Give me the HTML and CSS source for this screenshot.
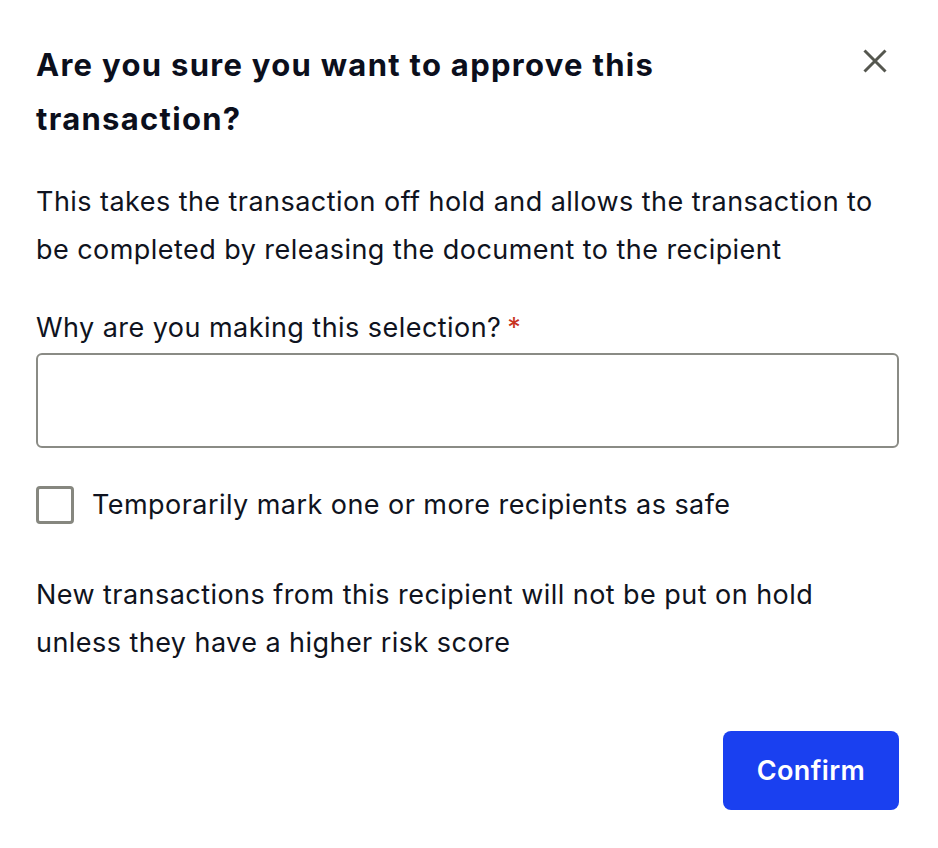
FILE: index.html
```html
<!DOCTYPE html>
<html lang="en">
<head>
<meta charset="utf-8">
<title>Approve transaction</title>
<link rel="stylesheet" href="styles.css">
</head>
<body>
<div class="dialog">
  <div class="header">
    <h1 class="title">Are you sure you want to approve this transaction?</h1>
    <button class="close" aria-label="Close">
      <svg width="24" height="24" viewBox="0 0 24 24"><path d="M1.5 1.5 L22.5 22.5 M22.5 1.5 L1.5 22.5" stroke="#55574f" stroke-width="3" stroke-linecap="butt" fill="none"/></svg>
    </button>
  </div>
  <p class="desc">This takes the transaction off hold and allows the transaction to be completed by releasing the document to the recipient</p>
  <label class="label">Why are you making this selection?<span class="req">*</span></label>
  <textarea class="input"></textarea>
  <label class="check-row"><span class="checkbox"></span><span>Temporarily mark one or more recipients as safe</span></label>
  <p class="note">New transactions from this recipient will not be put on hold unless they have a higher risk score</p>
  <div class="footer"><button class="confirm">Confirm</button></div>
</div>
</body>
</html>
```
FILE: styles.css
```css
html, body { margin: 0; padding: 0; background: #fff; }
body { font-family: Inter, "Noto Sans", sans-serif; color: #0f1320; font-optical-sizing: none; font-variation-settings: "opsz" 14; }
.dialog { padding: 38px 39px 0 36px; display: flex; flex-direction: column; }
.header { display: flex; align-items: flex-start; gap: 24px; }
.title { flex: 1; margin: 0; font-size: 31px; font-weight: 700; line-height: 54px; letter-spacing: 1.3px; color: #0b0f1c; }
.close { margin: 11px 12px 0 0; width: 24px; height: 24px; padding: 0; border: 0; background: none; display: flex; align-items: center; justify-content: center; }
.desc, .label, .check-row, .note { font-size: 27px; line-height: 48px; letter-spacing: 0.45px; }
.desc { margin: 32px 0 0; }
.label { margin-top: 30px; }
.req { color: #c8321e; margin-left: 6px; }
.input { margin-top: 1px; height: 95px; box-sizing: border-box; border: 2px solid #8a8b85; border-radius: 6px; resize: none; display: block; width: 100%; font: inherit; }
.check-row { margin-top: 33px; display: flex; align-items: center; gap: 18px; }
.checkbox { width: 38px; height: 38px; box-sizing: border-box; border: 3px solid #86877f; border-radius: 4px; flex: none; }
.note { margin: 42px 0 0; }
.footer { display: flex; justify-content: flex-end; margin-top: 64px; }
.confirm { width: 176px; height: 79px; border: 0; border-radius: 8px; background: #1a40f0; color: #fff; font-family: inherit; font-variation-settings: inherit; font-size: 27px; font-weight: 600; letter-spacing: 0.4px; }
```
